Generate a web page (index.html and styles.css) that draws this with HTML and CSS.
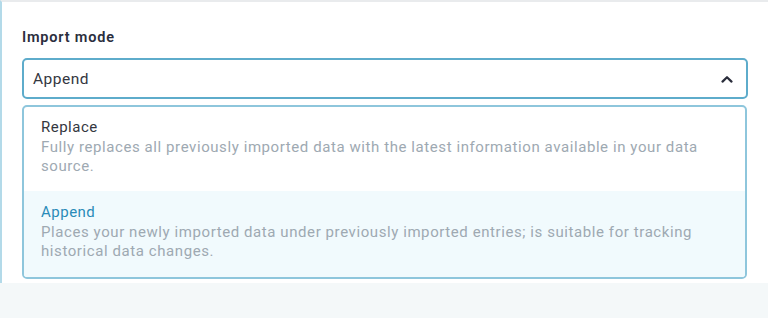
FILE: index.html
```html
<!DOCTYPE html>
<html>
<head>
<meta charset="utf-8">
<link rel="stylesheet" href="styles.css">
</head>
<body>
<div class="panel">
  <div class="field">
    <div class="label">Import mode</div>
    <div class="select">
      <span class="value">Append</span>
      <svg class="chev" width="12" height="8" viewBox="0 0 12 8"><path d="M1.5 6.6 L6 2.2 L10.5 6.6" fill="none" stroke="#2a2d3b" stroke-width="2.2" stroke-linecap="round" stroke-linejoin="round"/></svg>
    </div>
    <div class="menu">
      <div class="opt">
        <div class="opt-title">Replace</div>
        <div class="opt-desc">Fully replaces all previously imported data with the latest information available in your data source.</div>
      </div>
      <div class="opt active">
        <div class="opt-title">Append</div>
        <div class="opt-desc">Places your newly imported data under previously imported entries; is suitable for tracking historical data changes.</div>
      </div>
    </div>
  </div>
</div>
<div class="footer"></div>
</body>
</html>
```

FILE: styles.css
```css
html, body {
  margin: 0;
  padding: 0;
}
body {
  width: 768px;
  height: 318px;
  overflow: hidden;
  background: #f4f8f9;
  font-family: Roboto, "Liberation Sans", sans-serif;
}
.panel {
  height: 281px;
  background: #ffffff;
  border-top: 2px solid #e9ebed;
  border-left: 2px solid #b3dae9;
  box-sizing: content-box;
}
.field {
  padding: 26px 20px 0 20px;
}
.label {
  font-size: 14.5px;
  font-weight: 600;
  color: #2b2e3d;
  line-height: 20px;
  letter-spacing: 0.8px;
  margin-bottom: 10px;
}
.select {
  height: 37px;
  border: 2px solid #5eaccb;
  border-radius: 5px;
  display: flex;
  align-items: center;
  justify-content: space-between;
  padding: 0 13px 0 9px;
}
.value {
  font-size: 15.5px;
  letter-spacing: 0.5px;
  color: #34373f;
}
.chev {
  display: block;
}
.menu {
  margin-top: 6px;
  margin-right: 1px;
  border: 2px solid #8ec6dc;
  border-radius: 5px;
  overflow: hidden;
}
.opt {
  padding: 9px 18px 15px 17px;
}
.opt.active {
  background: #f1fafd;
  padding-top: 10px;
  padding-bottom: 16px;
}
.opt-title {
  font-size: 15px;
  line-height: 22px;
  letter-spacing: 0.5px;
  color: #34373f;
}
.opt.active .opt-title {
  color: #2a8bb8;
}
.opt-desc {
  font-size: 15px;
  line-height: 19px;
  letter-spacing: 0.58px;
  color: #9ea9b2;
}
```
